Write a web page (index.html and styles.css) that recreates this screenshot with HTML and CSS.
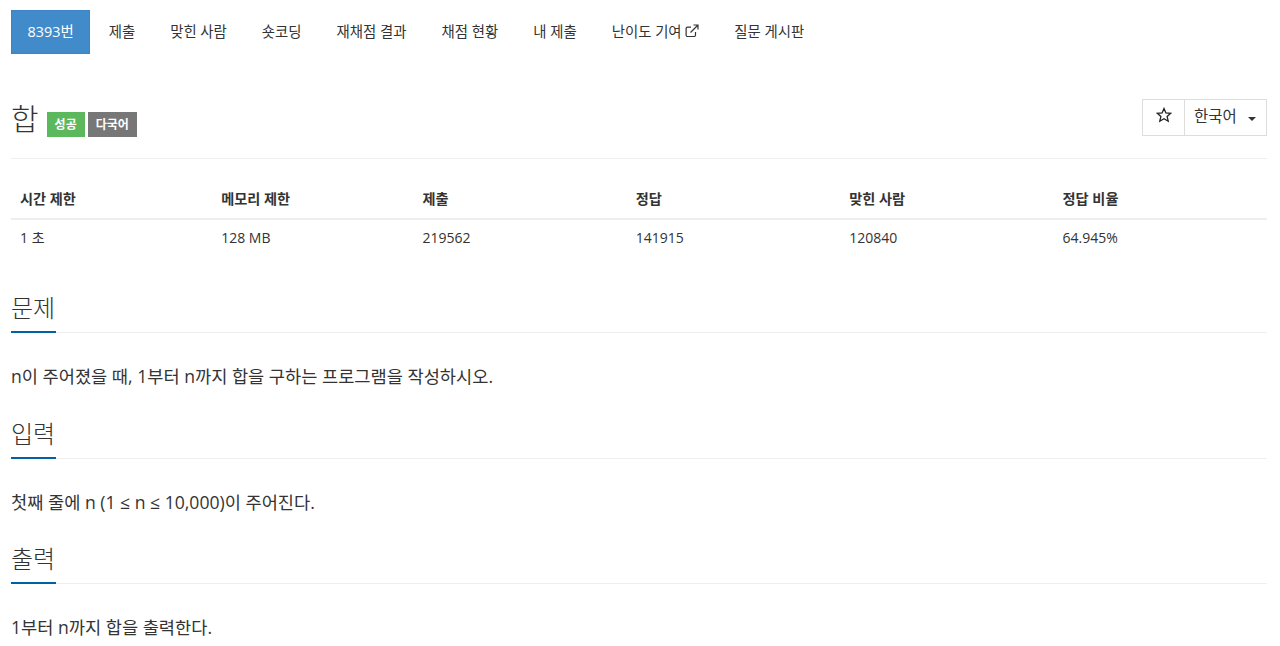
FILE: index.html
```html
<!DOCTYPE html>
<html lang="ko">
<head>
    <meta charset="UTF-8">
    <title>합</title>
    <link rel="stylesheet" href="styles.css">
</head>
<body>
    <!-- Problem menu -->
    <ul class="menu">
        <li class="active">8393번</li>
        <li>제출</li>
        <li>맞힌 사람</li>
        <li>숏코딩</li>
        <li>재채점 결과</li>
        <li>채점 현황</li>
        <li>내 제출</li>
        <li>난이도 기여
            <svg class="external" width="14" height="14" viewBox="0 0 14 14" fill="none" stroke="#333" stroke-width="1.2">
                <path d="M10.5 8v3a1.5 1.5 0 0 1-1.5 1.5H2.600a1.500 1.500 0 0 1-1.500-1.500V4.600a1.500 1.500 0 0 1 1.500-1.500H6"/>
                <path d="M5.500 8.500 12.500 1.500M8.500 1h4.500v4.500"/>
            </svg>
        </li>
        <li>질문 게시판</li>
    </ul>

    <!-- Title -->
    <div class="title_bar">
        <div class="title">
            <h1>합</h1>
            <span class="label green">성공</span>
            <span class="label grey">다국어</span>
        </div>
        <div class="btn_group">
            <button class="btn star">
                <svg width="16" height="16" viewBox="0 0 16 16" fill="none" stroke="#222" stroke-width="1.300">
                    <path d="M8 1.500 9.900 5.900 14.700 6.300 11.100 9.500 12.200 14.200 8 11.700 3.800 14.200 4.900 9.500 1.300 6.300 6.100 5.900Z"/>
                </svg>
            </button>
            <button class="btn lang">한국어<span class="caret"></span></button>
        </div>
    </div>

    <!-- Limits -->
    <table class="info">
        <thead>
            <tr>
                <th class="narrow">시간 제한</th>
                <th class="narrow">메모리 제한</th>
                <th>제출</th>
                <th>정답</th>
                <th>맞힌 사람</th>
                <th>정답 비율</th>
            </tr>
        </thead>
        <tbody>
            <tr>
                <td>1 초</td>
                <td>128 MB</td>
                <td>219562</td>
                <td>141915</td>
                <td>120840</td>
                <td>64.945%</td>
            </tr>
        </tbody>
    </table>

    <!-- Sections -->
    <section class="block first">
        <div class="headline"><h2>문제</h2></div>
        <p>n이 주어졌을 때, 1부터 n까지 합을 구하는 프로그램을 작성하시오.</p>
    </section>
    <section class="block">
        <div class="headline"><h2>입력</h2></div>
        <p>첫째 줄에 n (1 ≤ n ≤ 10,000)이 주어진다.</p>
    </section>
    <section class="block">
        <div class="headline"><h2>출력</h2></div>
        <p>1부터 n까지 합을 출력한다.</p>
    </section>
</body>
</html>
```

FILE: styles.css
```css
/* General styles */
html, body {
    height: 100%;
    overflow: hidden;
}

body {
    margin: 0;
    padding: 10px 13px 0 11px;
    background: #fff;
    color: #333;
    font-family: 'Open Sans', 'Noto Sans CJK KR', sans-serif;
    font-size: 14px;
    line-height: 20px;
}

/* Menu */
.menu {
    display: flex;
    gap: 2px;
    list-style: none;
    margin: 0;
    padding: 0;
}

.menu li {
    padding: 12px 16.5px;
    height: 20px;
    font-size: 14.4px;
    white-space: nowrap;
}

.menu .active {
    padding: 11px 15.5px;
    height: 20px;
    background: #428bca;
    border: 1px solid #3b85c6;
    color: #fff;
}

.external {
    vertical-align: -1px;
}

/* Title */
.title_bar {
    display: flex;
    justify-content: space-between;
    align-items: flex-start;
    margin-top: 45px;
    padding-bottom: 21px;
    border-bottom: 1px solid #eee;
}

.title {
    display: flex;
    align-items: flex-end;
    gap: 3px;
    padding-top: 2px;
}

.title h1 {
    margin: 0 5px 0 0;
    font-size: 30px;
    font-weight: 300;
    line-height: 36px;
}

.label {
    padding: 0 8px;
    height: 25px;
    line-height: 25px;
    color: #fff;
    font-size: 12px;
    font-weight: 700;
}

.green {
    background: #5cb85c;
}

.grey {
    background: #777;
}

.btn_group {
    display: flex;
}

.btn {
    height: 37px;
    margin: 0;
    padding: 0;
    background: #fff;
    border: 1px solid #ddd;
    color: #333;
    font-family: inherit;
    font-size: 14px;
}

.star {
    width: 43px;
}

.star svg {
    display: block;
    margin: 0 auto 6px;
}

.lang {
    width: 83px;
    margin-left: -1px;
    padding: 0 0 4px 9px;
    font-size: 15.500px;
    text-align: left;
}

.caret {
    display: inline-block;
    margin-left: 11px;
    vertical-align: 1px;
    border-top: 4px solid #333;
    border-left: 4px solid transparent;
    border-right: 4px solid transparent;
}

/* Limits table */
.info {
    width: 100%;
    margin-top: 21px;
    border-collapse: collapse;
    table-layout: fixed;
}

.info th,
.info td {
    padding: 8px 9px 9px;
    text-align: left;
    width: 17%;
}

.info th {
    padding: 9px;
    font-size: 14.2px;
    font-weight: 700;
    border-bottom: 2px solid #eee;
}

.info .narrow {
    width: 15.950%;
}

/* Sections */
.block {
    margin-top: 28px;
}

.block.first {
    margin-top: 34px;
    margin-bottom: 29px;
}

.headline {
    border-bottom: 1px solid #eee;
}

.headline h2 {
    display: inline-block;
    margin: 0 0 -1px;
    padding-bottom: 6px;
    border-bottom: 2px solid #0062a3;
    font-size: 24px;
    font-weight: 300;
    line-height: 34px;
    width: 45px;
    white-space: nowrap;
}

.block p {
    margin: 31px 0 0;
    font-size: 17.600px;
    line-height: 24px;
}
```
